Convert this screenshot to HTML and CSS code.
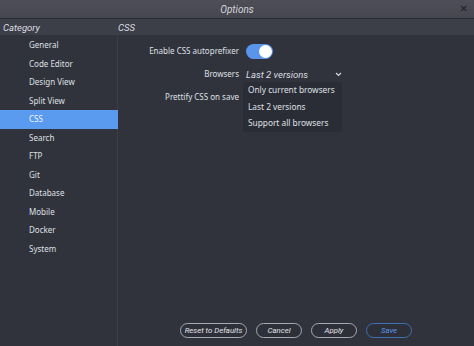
FILE: index.html
```html
<!DOCTYPE html>
<html>
	<head>
		<meta charset="utf-8">
		<title>Options</title>
		<link rel="stylesheet" href="styles.css">
	</head>
	<body>
		<div class="window">
			<div class="titlebar">
				<span class="title">Options</span>
				<span class="close">&#x2715;</span>
			</div>
			<div class="heads">
				<div class="head-cat">Category</div>
				<div class="head-page">CSS</div>
			</div>
			<div class="body">
				<ul class="sidebar">
					<li>General</li>
					<li>Code Editor</li>
					<li>Design View</li>
					<li>Split View</li>
					<li class="active">CSS</li>
					<li>Search</li>
					<li>FTP</li>
					<li>Git</li>
					<li>Database</li>
					<li>Mobile</li>
					<li>Docker</li>
					<li>System</li>
				</ul>
				<div class="main">
					<div class="form">
						<label>Enable CSS autoprefixer</label>
						<div class="toggle"><span class="knob"></span></div>

						<label>Browsers</label>
						<div class="select">
							<span class="value">Last 2 versions</span>
							<svg class="chev" width="7" height="5" viewBox="0 0 7 5"><path d="M1 1 L3.5 3.5 L6 1" fill="none" stroke="#d8d9de" stroke-width="1.2"/></svg>
							<ul class="menu">
								<li>Only current browsers</li>
								<li>Last 2 versions</li>
								<li>Support all browsers</li>
							</ul>
						</div>

						<label>Prettify CSS on save</label>
						<div class="toggle"><span class="knob"></span></div>
					</div>
					<div class="buttons">
						<button class="reset">Reset to Defaults</button>
						<button>Cancel</button>
						<button>Apply</button>
						<button class="save">Save</button>
					</div>
				</div>
			</div>
		</div>
	</body>
</html>
```

FILE: styles.css
```css
* {
	margin: 0;
	padding: 0;
	box-sizing: border-box;
}

body {
	width: 474px;
	height: 346px;
	background: #30323c;
	font-family: "Noto Sans", sans-serif;
	font-size: 8px;
	color: #dfe0e4;
	overflow: hidden;
}

.window {
	display: flex;
	flex-direction: column;
	height: 346px;
}

.titlebar {
	height: 19px;
	background: linear-gradient(#4d4e57, #45464f);
	border-bottom: 1px solid #2b2c33;
	display: flex;
	align-items: center;
	justify-content: center;
	position: relative;
}

.title {
	font-family: "Roboto", sans-serif;
	font-style: italic;
	font-size: 10px;
	color: #d4d5da;
}

.close {
	position: absolute;
	right: 6px;
	top: 3px;
	font-size: 10px;
	font-weight: bold;
	color: #1d1e23;
	font-family: "DejaVu Sans", sans-serif;
}

.heads {
	height: 16px;
	background: #3c3e48;
	display: flex;
	align-items: center;
	font-family: "Roboto", sans-serif;
	font-style: italic;
	font-size: 9.5px;
	color: #dcdde2;
}

.head-cat {
	width: 118px;
	padding-left: 3px;
}

.body {
	flex: 1;
	display: flex;
}

.sidebar {
	width: 118px;
	border-right: 1px solid #3b3d47;
	list-style: none;
	padding-top: 1px;
}

.sidebar li {
	height: 18.5px;
	line-height: 18.5px;
	padding-left: 29px;
}

.sidebar li.active {
	background: #5a9bef;
	color: #f2f5fa;
	margin-right: -1px;
}

.main {
	flex: 1;
	display: flex;
	flex-direction: column;
	justify-content: space-between;
	padding: 8px 0 8px;
}

.form {
	display: grid;
	grid-template-columns: 121px 96px;
	column-gap: 7px;
	row-gap: 7px;
	align-items: center;
}

.form label {
	text-align: right;
	height: 16px;
	line-height: 16px;
}

.toggle {
	width: 27px;
	height: 15px;
	border-radius: 8px;
	background: #5a95ec;
	position: relative;
}

.knob {
	position: absolute;
	right: 1px;
	top: 1px;
	width: 13px;
	height: 13px;
	border-radius: 50%;
	background: #ffffff;
}

.select {
	position: relative;
	display: flex;
	align-items: center;
	justify-content: space-between;
	width: 96px;
	height: 16px;
	padding-top: 1px;
}

.value {
	font-family: "Roboto", sans-serif;
	font-style: italic;
	font-size: 9.5px;
	color: #dcdde2;
}

.menu {
	position: absolute;
	left: -3px;
	top: 16px;
	width: 99px;
	list-style: none;
	background: #2b2d36;
	border-radius: 2px;
	padding: 0;
	z-index: 2;
}

.menu li {
	height: 16.5px;
	line-height: 16.5px;
	padding-left: 5px;
	font-size: 8.3px;
}

.buttons {
	display: flex;
	justify-content: center;
	gap: 9px;
}

.buttons button {
	font-family: "Roboto", sans-serif;
	font-style: italic;
	font-size: 7.8px;
	color: #e2e3e7;
	background: #2e3039;
	border: 1.5px solid #a7a9b0;
	border-radius: 8px;
	height: 15px;
	padding: 0;
	width: 46px;
}

.buttons .reset {
	width: 67px;
}

.buttons .save {
	color: #5b95e6;
	border-color: #3f6fb4;
}
```
